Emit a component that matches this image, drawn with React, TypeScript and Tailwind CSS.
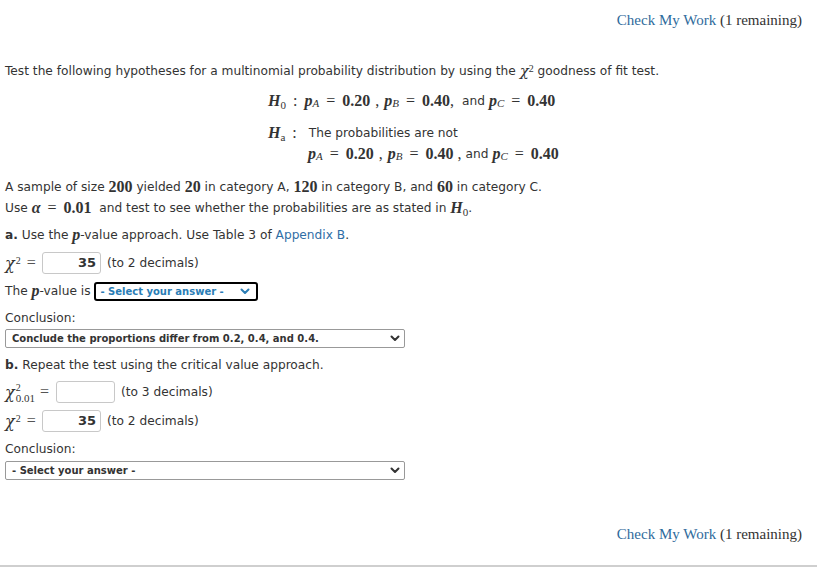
import React from "react";

const serif = "font-['Liberation_Serif',serif]";

function Chev({ color }: { color: string }) {
  return (
    <svg width="10" height="7" viewBox="0 0 10 7" className="shrink-0">
      <polyline points="1.5,1.5 5,5 8.5,1.5" fill="none" stroke={color} strokeWidth="2" strokeLinecap="round" strokeLinejoin="round" />
    </svg>
  );
}

function P({ sub }: { sub: string }) {
  return (
    <span className={`${serif} text-[16px]`}>
      <i className="font-bold">p</i>
      <sub className="text-[11px] italic relative top-[1px]">{sub}</sub>
    </span>
  );
}

function B({ children }: { children: React.ReactNode }) {
  return <b className={`${serif} text-[16px]`}>{children}</b>;
}

function Eq() {
  return <span className={`${serif} text-[16px] mx-[7px]`}>=</span>;
}

function Chi({ sub }: { sub?: string }) {
  return (
    <span className="inline-flex items-start h-[20px]">
      <i className="font-['DejaVu_Serif',serif] text-[16px] leading-[22px]">χ</i>
      {sub ? (
        <span className={`${serif} inline-flex flex-col leading-none ml-[1px]`}>
          <span className="text-[10px] leading-[10px] mt-[1px]">2</span>
          <span className="text-[11px] leading-[11px]">0.01</span>
        </span>
      ) : (
        <span className={`${serif} text-[10px] leading-[10px] mt-[3px] ml-[1px]`}>2</span>
      )}
    </span>
  );
}

function Input({ value }: { value?: string }) {
  return (
    <div className="w-[59px] h-[22px] border border-[#c8c8c8] rounded-[3px] flex items-center justify-end pr-[4px] text-[13px] font-semibold text-[#333]">
      {value}
    </div>
  );
}

function CheckWork() {
  return (
    <div className={`${serif} text-[15px] text-[#333]`}>
      <span className="text-[#2f6b9c]">Check My Work</span> (1 remaining)
    </div>
  );
}

export default function App() {
  return (
    <div className="w-[817px] h-[568px] bg-white font-['DejaVu_Sans',sans-serif] text-[12.2px] text-[#333] flex flex-col">
      <div className="h-[22px] mt-[9px] flex items-center justify-end pr-[15px]">
        <CheckWork />
      </div>
      <div className="px-[5px] flex flex-col">
        <div className="h-[20px] mt-[30px] flex items-center whitespace-nowrap">
          Test the following hypotheses for a multinomial probability distribution by using the&nbsp;
          <span className="font-['DejaVu_Serif',serif] text-[15px] italic">χ</span>
          <sup className={`${serif} text-[10px] relative -top-[2px]`}>2</sup>&nbsp;goodness of fit test.
        </div>
        <div className="h-[20px] mt-[10px] flex items-center pl-[263px] whitespace-nowrap">
          <span className={`${serif} text-[16px]`}><i className="font-bold">H</i><sub className="text-[11px]">0</sub></span>
          <span className={`${serif} text-[16px] mx-[7px]`}>:</span>
          <P sub="A" /><Eq /><B>0.20</B>
          <span className={`${serif} text-[16px] mx-[5px]`}>,</span>
          <P sub="B" /><Eq /><B>0.40</B>
          <span className={`${serif} text-[16px]`}>,</span>
          <span className="ml-[8px] mr-[4px]">and</span>
          <P sub="C" /><Eq /><B>0.40</B>
        </div>
        <div className="h-[20px] mt-[12px] flex items-center pl-[263px] whitespace-nowrap">
          <span className={`${serif} text-[16px]`}><i className="font-bold">H</i><sub className="text-[11px]">a</sub></span>
          <span className={`${serif} text-[16px] ml-[7px] mr-[12px]`}>:</span>
          <span>The probabilities are not</span>
        </div>
        <div className="h-[20px] mt-[1px] flex items-center pl-[303px] whitespace-nowrap">
          <P sub="A" /><Eq /><B>0.20</B>
          <span className={`${serif} text-[16px] mx-[5px]`}>,</span>
          <P sub="B" /><Eq /><B>0.40</B>
          <span className={`${serif} text-[16px] mx-[4px]`}>,</span>
          <span className="mr-[4px]">and</span>
          <P sub="C" /><Eq /><B>0.40</B>
        </div>
        <div className="h-[20px] mt-[13px] flex items-center whitespace-nowrap">
          A sample of size&nbsp;<B>200</B>&nbsp;yielded&nbsp;<B>20</B>&nbsp;in category A,&nbsp;<B>120</B>&nbsp;in category B, and&nbsp;<B>60</B>&nbsp;in category C.
        </div>
        <div className="h-[20px] mt-[1px] flex items-center whitespace-nowrap">
          Use&nbsp;<i className={`${serif} text-[16px] font-bold`}>α</i><Eq /><B>0.01</B>&nbsp;&nbsp;and test to see whether the probabilities are as stated in&nbsp;
          <span className={`${serif} text-[16px]`}><i className="font-bold">H</i><sub className="text-[11px]">0</sub></span>.
        </div>
        <div className="h-[20px] mt-[7px] flex items-center whitespace-nowrap">
          <b>a.</b>&nbsp;Use the&nbsp;<i className={`${serif} text-[16px] font-bold`}>p</i>-value approach. Use Table 3 of&nbsp;
          <span className="text-[#2f6ea6]">Appendix B</span>.
        </div>
        <div className="h-[22px] mt-[7px] flex items-center whitespace-nowrap">
          <div className="w-[37px] flex items-center"><Chi /><span className={`${serif} text-[16px] ml-[6px] text-[#555]`}>=</span></div>
          <Input value="35" />
          <span className="ml-[6px]">(to 2 decimals)</span>
        </div>
        <div className="h-[20px] mt-[7px] flex items-center whitespace-nowrap">
          The&nbsp;<i className={`${serif} text-[16px] font-bold`}>p</i>-value is&nbsp;
          <div className="w-[164px] h-[19px] border-2 border-black rounded-[3px] flex items-center justify-between pl-[4px] pr-[6px] text-[10px] font-bold text-[#2a7db5]">
            <span>- Select your answer -</span>
            <Chev color="#2a7db5" />
          </div>
        </div>
        <div className="h-[20px] mt-[7px] flex items-center">Conclusion:</div>
        <div className="h-[20px] mt-[0px] flex items-center">
          <div className="w-[400px] h-[19px] border border-[#999] rounded-[2px] flex items-center justify-between pl-[6px] pr-[4px] text-[10px] font-bold text-[#333]">
            <span>Conclude the proportions differ from 0.2, 0.4, and 0.4.</span>
            <Chev color="#333" />
          </div>
        </div>
        <div className="h-[20px] mt-[7px] flex items-center whitespace-nowrap">
          <b>b.</b>&nbsp;Repeat the test using the critical value approach.
        </div>
        <div className="h-[22px] mt-[6px] flex items-center whitespace-nowrap">
          <div className="w-[51px] flex items-center"><Chi sub="0.01" /><span className={`${serif} text-[16px] ml-[5px] text-[#555]`}>=</span></div>
          <Input />
          <span className="ml-[6px]">(to 3 decimals)</span>
        </div>
        <div className="h-[22px] mt-[7px] flex items-center whitespace-nowrap">
          <div className="w-[37px] flex items-center"><Chi /><span className={`${serif} text-[16px] ml-[6px] text-[#555]`}>=</span></div>
          <Input value="35" />
          <span className="ml-[6px]">(to 2 decimals)</span>
        </div>
        <div className="h-[20px] mt-[7px] flex items-center">Conclusion:</div>
        <div className="h-[20px] mt-[1px] flex items-center">
          <div className="w-[400px] h-[19px] border border-[#999] rounded-[2px] flex items-center justify-between pl-[6px] pr-[4px] text-[10px] font-bold text-[#333]">
            <span>- Select your answer -</span>
            <Chev color="#333" />
          </div>
        </div>
      </div>
      <div className="h-[22px] mt-[43px] flex items-center justify-end pr-[15px]">
        <CheckWork />
      </div>
      <div className="flex-1" />
      <div className="h-[2px] bg-[#cfcfcf] mb-[1px]" />
    </div>
  );
}
